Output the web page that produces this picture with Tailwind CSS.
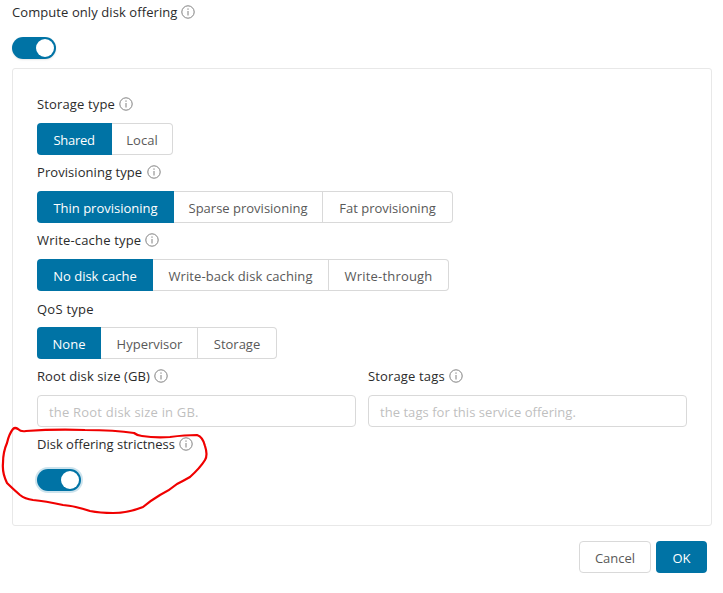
<!DOCTYPE html>
<html lang="en">
<head>
    <meta charset="UTF-8">
    <title>Compute only disk offering</title>
    <script src="https://cdn.jsdelivr.net/npm/@tailwindcss/browser@4"></script>
</head>
<body class="bg-white">
    <div class="relative w-[723px] h-[593px] overflow-hidden bg-white font-['Open_Sans',sans-serif] text-[13px] leading-[18px] text-[#2b2b2b]">
        <div class="px-3 pt-[3px]">
            <div class="flex items-center gap-1 h-[18px]">
                <span class="tracking-[0.08px]">Compute only disk offering</span>
                <svg class="w-[14px] h-[14px] text-[#808080]" viewBox="0 0 14 14" fill="none" stroke="currentColor"><circle cx="7" cy="7" r="6.2"/><path d="M7 6v4.5"/><path d="M7 3.4v1.4"/></svg>
            </div>
            <div class="mt-[16px] w-[44px] h-[22px] rounded-full bg-[#0073a5] flex items-center justify-end pr-[2px] shadow-[0_1px_2px_rgba(0,0,0,0.1)]">
                <span class="w-[18px] h-[18px] rounded-full bg-white"></span>
            </div>

            <div class="mt-[9px] w-[700px] h-[458px] border border-[#e8e8e8] rounded-[3px] px-6 pt-[26px]">
                <div class="flex items-center gap-1 h-[18px]">
                    <span class="tracking-[0.15px]">Storage type</span>
                    <svg class="w-[14px] h-[14px] text-[#808080]" viewBox="0 0 14 14" fill="none" stroke="currentColor"><circle cx="7" cy="7" r="6.2"/><path d="M7 6v4.5"/><path d="M7 3.4v1.4"/></svg>
                </div>
                <div class="mt-[10px] flex h-[32px] w-fit">
                    <span class="flex items-center justify-center pt-px pr-px w-[75px] bg-[#0073a5] text-white rounded-l-[4px] tracking-[-0.3px]">Shared</span>
                    <span class="flex items-center justify-center pt-px w-[61px] border border-l-0 border-[#d9d9d9] text-[#595959] rounded-r-[4px]">Local</span>
                </div>

                <div class="mt-[8px] flex items-center gap-[5px] h-[18px]">
                    <span class="tracking-[0.06px]">Provisioning type</span>
                    <svg class="w-[14px] h-[14px] text-[#808080]" viewBox="0 0 14 14" fill="none" stroke="currentColor"><circle cx="7" cy="7" r="6.2"/><path d="M7 6v4.5"/><path d="M7 3.4v1.4"/></svg>
                </div>
                <div class="mt-[10px] flex h-[32px] w-fit">
                    <span class="flex items-center justify-center pt-px w-[137px] bg-[#0073a5] text-white rounded-l-[4px]">Thin provisioning</span>
                    <span class="flex items-center justify-center pt-px w-[149px] border border-l-0 border-[#d9d9d9] text-[#595959]">Sparse provisioning</span>
                    <span class="flex items-center justify-center pt-px w-[130px] border border-l-0 border-[#d9d9d9] text-[#595959] rounded-r-[4px]">Fat provisioning</span>
                </div>

                <div class="mt-[8px] flex items-center gap-1 h-[18px]">
                    <span class="tracking-[0.18px]">Write-cache type</span>
                    <svg class="w-[14px] h-[14px] text-[#808080]" viewBox="0 0 14 14" fill="none" stroke="currentColor"><circle cx="7" cy="7" r="6.2"/><path d="M7 6v4.5"/><path d="M7 3.4v1.4"/></svg>
                </div>
                <div class="mt-[10px] flex h-[32px] w-fit">
                    <span class="flex items-center justify-center pt-px w-[116px] bg-[#0073a5] text-white rounded-l-[4px]">No disk cache</span>
                    <span class="flex items-center justify-center pt-px w-[176px] border border-l-0 border-[#d9d9d9] text-[#595959] tracking-[0.1px]">Write-back disk caching</span>
                    <span class="flex items-center justify-center pt-px w-[120px] border border-l-0 border-[#d9d9d9] text-[#595959] rounded-r-[4px] tracking-[0.2px]">Write-through</span>
                </div>

                <div class="mt-[9px] flex items-center gap-1 h-[18px]">
                    <span class="tracking-[0.25px]">QoS type</span>
                </div>
                <div class="mt-[9px] flex h-[32px] w-fit">
                    <span class="flex items-center justify-center pt-px w-[64px] bg-[#0073a5] text-white rounded-l-[4px]">None</span>
                    <span class="flex items-center justify-center pt-px pl-px w-[97px] border border-l-0 border-[#d9d9d9] text-[#595959]">Hypervisor</span>
                    <span class="flex items-center justify-center pt-px w-[79px] border border-l-0 border-[#d9d9d9] text-[#595959] rounded-r-[4px]">Storage</span>
                </div>

                <div class="mt-[8px] grid grid-cols-2 gap-x-3 w-[650px]">
                    <div>
                        <div class="flex items-center gap-1 h-[18px]">
                            <span class="tracking-[0.1px]">Root disk size (GB)</span>
                            <svg class="w-[14px] h-[14px] text-[#808080]" viewBox="0 0 14 14" fill="none" stroke="currentColor"><circle cx="7" cy="7" r="6.2"/><path d="M7 6v4.5"/><path d="M7 3.4v1.4"/></svg>
                        </div>
                        <div class="mt-[10px] h-[32px] pt-px border border-[#d9d9d9] rounded-[4px] flex items-center px-[11px] text-[#bfbfbf] tracking-[0.2px]">the Root disk size in GB.</div>
                    </div>
                    <div>
                        <div class="flex items-center gap-1 h-[18px]">
                            <span class="tracking-[0.15px]">Storage tags</span>
                            <svg class="w-[14px] h-[14px] text-[#808080]" viewBox="0 0 14 14" fill="none" stroke="currentColor"><circle cx="7" cy="7" r="6.2"/><path d="M7 6v4.5"/><path d="M7 3.4v1.4"/></svg>
                        </div>
                        <div class="mt-[10px] h-[32px] pt-px border border-[#d9d9d9] rounded-[4px] flex items-center px-[11px] text-[#bfbfbf] tracking-[0.04px]">the tags for this service offering.</div>
                    </div>
                </div>

                <div class="mt-[8px] flex items-center gap-1 h-[18px]">
                    <span>Disk offering strictness</span>
                    <svg class="w-[14px] h-[14px] text-[#808080]" viewBox="0 0 14 14" fill="none" stroke="currentColor"><circle cx="7" cy="7" r="6.2"/><path d="M7 6v4.5"/><path d="M7 3.4v1.4"/></svg>
                </div>
                <div class="mt-[16px] w-[44px] h-[22px] rounded-full bg-[#0073a5] flex items-center justify-end pr-[2px] shadow-[0_0_0_2px_rgba(0,115,165,0.2)]">
                    <span class="w-[18px] h-[18px] rounded-full bg-white"></span>
                </div>
            </div>

            <div class="mt-[15px] flex justify-end gap-[5px] w-[695px]">
                <span class="h-[32px] w-[72px] pt-px flex items-center justify-center border border-[#d9d9d9] rounded-[4px] text-[#595959]">Cancel</span>
                <span class="h-[32px] w-[51px] pt-px flex items-center justify-center bg-[#0073a5] rounded-[4px] text-white">OK</span>
            </div>
        </div>

        <!-- hand drawn marker on top of the screenshot -->
        <svg class="absolute left-0 top-0 pointer-events-none" width="723" height="593" viewBox="0 0 723 593" fill="none">
            <path d="M13 429 Q15 427 18 429 Q21 432 26 431 Q55 429 85 430 Q115 430 134 433 Q138 436 142 436 Q155 438 170 437 Q185 435 197 435 Q203 437 205 446 Q208 455 205 460 Q200 468 190 477 Q183 481 177 484 Q170 490 160 495 Q150 501 143 507 Q128 513 113 513 Q100 513 90 511 Q75 506 63 505 Q45 501 33 500 Q25 499 20 495 Q12 488 7 483 Q2 473 3 463 Q3 452 7 443 Q9 434 13 429 Z" stroke="#f00000" stroke-width="2.2" stroke-linejoin="round"/>
        </svg>
    </div>
</body>
</html>
